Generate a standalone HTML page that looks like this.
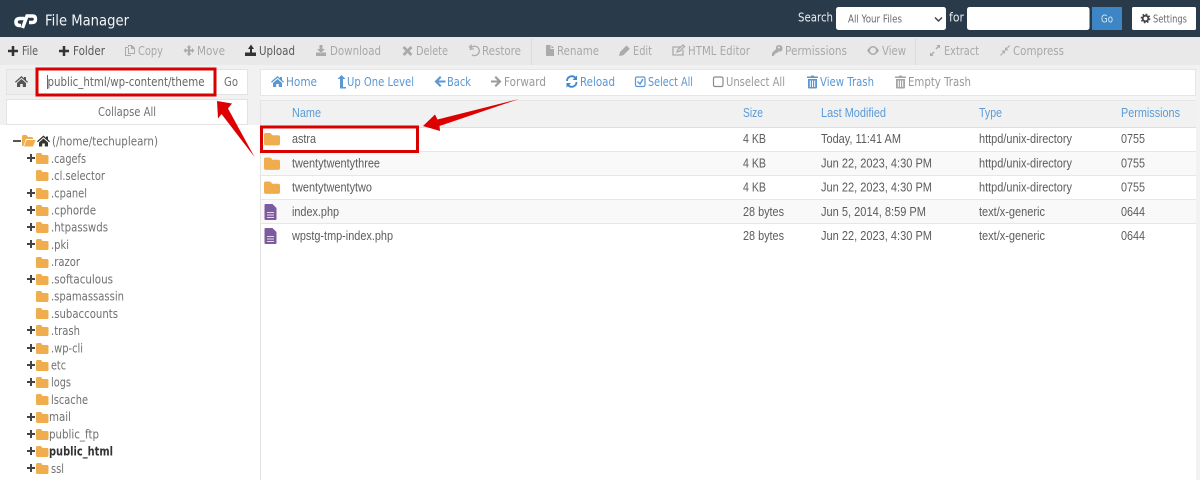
<!DOCTYPE html>
<html>
<head>
<meta charset="utf-8">
<title>File Manager</title>
<style>
html,body{margin:0;padding:0;background:#fff;width:1200px;height:480px;overflow:hidden}
svg{display:block;filter:blur(0.35px)}
text{font-family:"Liberation Sans",sans-serif;font-size:13px}
.t,.d,.a,.n,.g,.o{font-family:"DejaVu Sans","Liberation Sans",sans-serif;font-size:12.5px}
.t{fill:#707070}
.d{fill:#a8a8a8}
.a{fill:#5a5a5a}
.n{fill:#5a97d3}
.g{fill:#989898}
.h{fill:#5b9bd8;font-size:12.5px}
.c{fill:#5c5c5c;font-size:12.5px}
</style>
</head>
<body>
<svg width="1200" height="480" viewBox="0 0 1200 480" xmlns="http://www.w3.org/2000/svg">
<defs>
<path id="folder" d="M0 1.5Q0 0 1.5 0H5L6.500 2H11Q12.500 2 12.500 3.500V9.500Q12.500 11 11 11H1.500Q0 11 0 9.500Z" fill="#f0ad4e"/>
<path id="plus" d="M3 0H5V3H8V5H5V8H3V5H0V3H3Z"/>
<path id="home" d="M6.500 0L9 2.200V1H11V4L13 5.800L12.200 6.700L6.500 1.800L0.800 6.700L0 5.800ZM2 7L6.500 3L11 7V11H7.800V8H5.200V11H2Z"/>
<path id="file" d="M0 1Q0 0 1 0H8L12 4V15Q12 16 11 16H1Q0 16 0 15Z" fill="#7c5c9e"/>
<path id="trash" d="M3.500 1L4.500 0H6.500L7.500 1H11V2.500H0V1ZM1 3.500H10V12Q10 13 9 13H2Q1 13 1 12ZM2.800 5V11.500H3.800V5ZM5 5V11.500H6V5ZM7.200 5V11.500H8.200V5Z" fill-rule="evenodd"/>
</defs>

<!-- page backgrounds -->
<rect width="1200" height="480" fill="#fff"/>
<rect x="0" y="65" width="1200" height="62" fill="#f1f1f1"/>
<rect x="0" y="125" width="260" height="355" fill="#fff"/>
<rect x="260" y="96" width="940" height="4" fill="#f5f5f5"/>
<rect x="1196" y="65" width="4" height="415" fill="#f2f2f2"/>
<rect x="260" y="100" width="1" height="380" fill="#e3e3e3"/>

<!-- header -->
<rect width="1200" height="37" fill="#293a4a"/>
<path d="M24.500 18.500H20Q16 18.500 16 22Q16 25.500 20 25.500H21" fill="none" stroke="#fff" stroke-width="3.600"/>
<path d="M22.500 28L27 16H32.500Q35.500 16 35.500 19Q35.500 22.500 32 22.500H29" fill="none" stroke="#fff" stroke-width="3.400"/>
<text x="45" y="25.500" textLength="84" lengthAdjust="spacingAndGlyphs" class="o" style="font-size:15.500px;fill:#f2f4f6">File Manager</text>
<text x="798" y="21.500" textLength="35" lengthAdjust="spacingAndGlyphs" class="o" style="font-size:12px;fill:#e8ebee">Search</text>
<rect x="836" y="7" width="110" height="23" rx="2.500" fill="#fff"/>
<text x="848" y="22.500" textLength="54" lengthAdjust="spacingAndGlyphs" class="o" style="font-size:11px;fill:#6a6a6a">All Your Files</text>
<path d="M935 17.500L938.500 21L942 17.500" fill="none" stroke="#444" stroke-width="1.500"/>
<text x="949" y="21.500" textLength="15" lengthAdjust="spacingAndGlyphs" class="o" style="font-size:12px;fill:#e8ebee">for</text>
<rect x="967" y="7" width="122.500" height="23" rx="2.500" fill="#fff"/>
<rect x="1092" y="7" width="30" height="23" fill="#3c86c6"/>
<text x="1101" y="22.500" textLength="12" lengthAdjust="spacingAndGlyphs" class="o" style="font-size:11px;fill:#d8e8f5">Go</text>
<rect x="1132" y="7" width="64" height="23" rx="1.500" fill="#fff"/>
<circle cx="1145.500" cy="18.500" r="2.800" fill="none" stroke="#444" stroke-width="1.800"/>
<circle cx="1145.500" cy="18.500" r="4.200" fill="none" stroke="#444" stroke-width="1.400" stroke-dasharray="1.700 1.600"/>
<text x="1153" y="22.500" textLength="34" lengthAdjust="spacingAndGlyphs" class="o" style="font-size:11px;fill:#6a6a6a">Settings</text>

<!-- toolbar -->
<rect y="37" width="1200" height="28" fill="#e9e9e9"/>
<rect x="531" y="38" width="1" height="27" fill="#dcdcdc"/>
<rect x="915" y="38" width="1" height="27" fill="#dcdcdc"/>
<g fill="#333">
<use href="#plus" transform="translate(8,46) scale(1.250)"/>
<use href="#plus" transform="translate(59,46) scale(1.250)"/>
<path d="M245 52.500H250V49H248L251 44.500L254 49H252V52.500H256V56H245Z"/>
</g>
<g fill="#ababab">
<path d="M125 47H129V48H126V55H131V56H125ZM128 45H132L135 48V54H128ZM129 46V53H134V49H131V46Z" fill-rule="evenodd"/>
<path d="M189 45L191.500 47.500H190V49.500H192V48L194.500 50.500L192 53V51.500H190V53.500H191.500L189 56L186.500 53.500H188V51.500H186V53L183.500 50.500L186 48V49.500H188V47.500H186.500Z"/>
<path d="M316 52.500H320L321 53.500L322 52.500H326V56H316ZM319.500 45H322.500V49H325L321 53L317 49H319.500Z"/>
<path d="M404.500 46L407.500 49L410.500 46L412.500 48L409.500 51L412.500 54L410.500 56L407.500 53L404.500 56L402.500 54L405.500 51L402.500 48Z"/>
<path d="M546 45H550.500V49H554V56H546ZM551.500 45.300L554 48H551.500Z"/>
<path d="M619 56L620 52L626.500 45.500L629.800 48.800L623.300 55.300Z"/>
<path d="M772 56V53L776 49Q775.500 45 779 45Q782.500 45 782.500 48.500Q782.500 52 778.500 51.500L777 53H775.500V54.500H774V56ZM778.800 46.500A1 1 0 1 0 778.801 46.500Z" fill-rule="evenodd"/>
<path d="M867 50.500Q870 46 873 46Q876 46 879 50.500Q876 55 873 55Q870 55 867 50.500ZM873 47.500A3 3 0 1 0 873.010 47.500Z" fill-rule="evenodd"/>
<path d="M930 56V52.500L931.300 53.700L933.500 51.500L934.500 52.500L932.300 54.700L933.500 56ZM940 45V48.500L938.700 47.300L936.500 49.500L935.500 48.500L937.700 46.300L936.500 45Z"/>
<path d="M1000 55L1003 52L1001.500 50.500H1005V54L1003.700 52.800L1001 55.800ZM1010 46L1007 49L1008.500 50.500H1005V47L1006.300 48.200L1009 45.200Z"/>
</g>
<g fill="none" stroke="#ababab" stroke-width="1.300">
<path d="M469 47.500L471 45.500V49H474M470 50A4.700 4.700 0 1 1 472 54.800"/>
<path d="M683 50V55H673V47H680"/>
<path d="M677 52L678 49.500L683 45L684.500 46.500L680 51Z"/>
</g>
<text x="22" y="55" textLength="16" lengthAdjust="spacingAndGlyphs" class="a">File</text>
<text x="73" y="55" textLength="32" lengthAdjust="spacingAndGlyphs" class="a">Folder</text>
<text x="138" y="55" textLength="25" lengthAdjust="spacingAndGlyphs" class="d">Copy</text>
<text x="197" y="55" textLength="28" lengthAdjust="spacingAndGlyphs" class="d">Move</text>
<text x="259" y="55" textLength="36" lengthAdjust="spacingAndGlyphs" class="a">Upload</text>
<text x="330" y="55" textLength="51" lengthAdjust="spacingAndGlyphs" class="d">Download</text>
<text x="416" y="55" textLength="32" lengthAdjust="spacingAndGlyphs" class="d">Delete</text>
<text x="482" y="55" textLength="39" lengthAdjust="spacingAndGlyphs" class="d">Restore</text>
<text x="557" y="55" textLength="42" lengthAdjust="spacingAndGlyphs" class="d">Rename</text>
<text x="633" y="55" textLength="19" lengthAdjust="spacingAndGlyphs" class="d">Edit</text>
<text x="688" y="55" textLength="62" lengthAdjust="spacingAndGlyphs" class="d">HTML Editor</text>
<text x="785" y="55" textLength="62" lengthAdjust="spacingAndGlyphs" class="d">Permissions</text>
<text x="882" y="55" textLength="24" lengthAdjust="spacingAndGlyphs" class="d">View</text>
<text x="944" y="55" textLength="35" lengthAdjust="spacingAndGlyphs" class="d">Extract</text>
<text x="1013" y="55" textLength="51" lengthAdjust="spacingAndGlyphs" class="d">Compress</text>

<!-- path bar -->
<rect x="6.500" y="69.500" width="241" height="25" fill="#fff" stroke="#e3e3e3"/>
<rect x="7" y="70" width="29" height="24" fill="#eeeeee"/>
<use href="#home" x="15" y="76" fill="#555"/>
<rect x="47" y="75" width="1" height="14" fill="#666"/>
<text x="47.500" y="86" textLength="157" lengthAdjust="spacingAndGlyphs" class="t" style="fill:#666">public_html/wp-content/theme</text>
<text x="224" y="86" textLength="14" lengthAdjust="spacingAndGlyphs" class="t">Go</text>
<rect x="6.500" y="99.500" width="241" height="25" fill="#fff" stroke="#e3e3e3"/>
<text x="98" y="116" textLength="58" lengthAdjust="spacingAndGlyphs" class="t">Collapse All</text>

<!-- tree -->
<rect x="13" y="140" width="8" height="2" fill="#555"/>
<path d="M22 136.500Q22 135 23.500 135H26.500L28 137H32Q33 137 33 138.500V139H26L23.500 146H22Z M26.500 140H35.500L33 146.500H24Z" fill="#f0ad4e"/>
<use href="#home" x="37" y="135.500" fill="#333"/>
<text x="52" y="145.500" textLength="106" lengthAdjust="spacingAndGlyphs" class="t">(/home/techuplearn)</text>

<g fill="#444">
<use href="#plus" x="27" y="154"/>
<use href="#plus" x="27" y="189"/>
<use href="#plus" x="27" y="206"/>
<use href="#plus" x="27" y="223"/>
<use href="#plus" x="27" y="240"/>
<use href="#plus" x="27" y="275"/>
<use href="#plus" x="27" y="326"/>
<use href="#plus" x="27" y="344"/>
<use href="#plus" x="27" y="361"/>
<use href="#plus" x="27" y="378"/>
<use href="#plus" x="27" y="413"/>
<use href="#plus" x="27" y="430"/>
<use href="#plus" x="27" y="447"/>
<use href="#plus" x="27" y="464"/>
</g>
<use href="#folder" x="36" y="153"/>
<use href="#folder" x="36" y="170"/>
<use href="#folder" x="36" y="188"/>
<use href="#folder" x="36" y="205"/>
<use href="#folder" x="36" y="222"/>
<use href="#folder" x="36" y="239"/>
<use href="#folder" x="36" y="257"/>
<use href="#folder" x="36" y="274"/>
<use href="#folder" x="36" y="291"/>
<use href="#folder" x="36" y="308"/>
<use href="#folder" x="36" y="325"/>
<use href="#folder" x="36" y="343"/>
<use href="#folder" x="36" y="360"/>
<use href="#folder" x="36" y="377"/>
<use href="#folder" x="36" y="394"/>
<use href="#folder" x="36" y="412"/>
<use href="#folder" x="36" y="429"/>
<use href="#folder" x="36" y="446"/>
<use href="#folder" x="36" y="463"/>

<text x="51" y="163" textLength="35" lengthAdjust="spacingAndGlyphs" class="t">.cagefs</text>
<text x="51" y="180" textLength="54" lengthAdjust="spacingAndGlyphs" class="t">.cl.selector</text>
<text x="51" y="197.500" textLength="36" lengthAdjust="spacingAndGlyphs" class="t">.cpanel</text>
<text x="51" y="214.500" textLength="45" lengthAdjust="spacingAndGlyphs" class="t">.cphorde</text>
<text x="51" y="231.500" textLength="57" lengthAdjust="spacingAndGlyphs" class="t">.htpasswds</text>
<text x="51" y="249" textLength="18" lengthAdjust="spacingAndGlyphs" class="t">.pki</text>
<text x="51" y="266" textLength="29" lengthAdjust="spacingAndGlyphs" class="t">.razor</text>
<text x="51" y="283.500" textLength="62" lengthAdjust="spacingAndGlyphs" class="t">.softaculous</text>
<text x="51" y="300.500" textLength="73" lengthAdjust="spacingAndGlyphs" class="t">.spamassassin</text>
<text x="51" y="318" textLength="67" lengthAdjust="spacingAndGlyphs" class="t">.subaccounts</text>
<text x="51" y="335" textLength="29" lengthAdjust="spacingAndGlyphs" class="t">.trash</text>
<text x="51" y="352.500" textLength="32" lengthAdjust="spacingAndGlyphs" class="t">.wp-cli</text>
<text x="51" y="369.500" textLength="15" lengthAdjust="spacingAndGlyphs" class="t">etc</text>
<text x="51" y="386.500" textLength="20" lengthAdjust="spacingAndGlyphs" class="t">logs</text>
<text x="51" y="404" textLength="37" lengthAdjust="spacingAndGlyphs" class="t">lscache</text>
<text x="49" y="421" textLength="22" lengthAdjust="spacingAndGlyphs" class="t">mail</text>
<text x="49" y="438.500" textLength="50" lengthAdjust="spacingAndGlyphs" class="t">public_ftp</text>
<text x="49" y="455.500" textLength="64" lengthAdjust="spacingAndGlyphs" class="t" style="font-weight:bold;fill:#333">public_html</text>
<text x="51" y="473" textLength="13" lengthAdjust="spacingAndGlyphs" class="t">ssl</text>

<!-- nav bar -->
<rect x="260.500" y="69.500" width="935" height="26" fill="#fff" stroke="#e6e6e6"/>
<g fill="#5a97d3">
<use href="#home" x="271" y="76"/>
<path d="M341.500 75L345.500 79H343V87H346V88.500H340V79H337.500Z"/>
<path d="M440 76L441.500 77.500L438.500 80.500H445.500V82.500H438.500L441.500 85.500L440 87L434.500 81.500Z"/>
<use href="#trash" x="807" y="75.500"/>
</g>
<path d="M496 76L494.500 77.500L497.500 80.500H491V82.500H497.500L494.500 85.500L496 87L501.500 81.500Z" fill="#9a9a9a"/>
<g fill="none" stroke="#3f87cc" stroke-width="1.800">
<path d="M567 81A4.800 4.800 0 0 1 575.500 78"/>
<path d="M576.500 82A4.800 4.800 0 0 1 568 85"/>
</g>
<path d="M577 75.500V80H572.500ZM566.500 87.500V83H571Z" fill="#3f87cc"/>
<rect x="635.500" y="77" width="9.500" height="9.500" rx="1.500" fill="none" stroke="#5a97d3" stroke-width="1.200"/>
<path d="M637.500 81.500L640 84L643 79" fill="none" stroke="#5a97d3" stroke-width="1.400"/>
<rect x="713.500" y="77" width="9.500" height="9.500" rx="1.500" fill="none" stroke="#8a8a8a" stroke-width="1.200"/>
<use href="#trash" x="895" y="75.500" fill="#a5a5a5"/>
<text x="286" y="86" textLength="31" lengthAdjust="spacingAndGlyphs" class="n">Home</text>
<text x="347" y="86" textLength="67" lengthAdjust="spacingAndGlyphs" class="n">Up One Level</text>
<text x="447" y="86" textLength="24" lengthAdjust="spacingAndGlyphs" class="n">Back</text>
<text x="504" y="86" textLength="42" lengthAdjust="spacingAndGlyphs" class="g">Forward</text>
<text x="580" y="86" textLength="35" lengthAdjust="spacingAndGlyphs" class="n">Reload</text>
<text x="648" y="86" textLength="45" lengthAdjust="spacingAndGlyphs" class="n">Select All</text>
<text x="726" y="86" textLength="59" lengthAdjust="spacingAndGlyphs" class="g">Unselect All</text>
<text x="820" y="86" textLength="54" lengthAdjust="spacingAndGlyphs" class="n">View Trash</text>
<text x="908" y="86" textLength="63" lengthAdjust="spacingAndGlyphs" class="g">Empty Trash</text>

<!-- table -->
<rect x="261" y="100" width="935" height="27" fill="#f1f1f1"/>
<rect x="261" y="100" width="935" height="1" fill="#e6e6e6"/>
<rect x="261" y="127" width="935" height="1" fill="#dedede"/>
<rect x="261" y="152" width="935" height="23" fill="#f9f9f9"/>
<rect x="261" y="200" width="935" height="23" fill="#f9f9f9"/>
<rect x="261" y="151" width="935" height="1" fill="#e6e6e6"/>
<rect x="261" y="175" width="935" height="1" fill="#e6e6e6"/>
<rect x="261" y="199" width="935" height="1" fill="#e6e6e6"/>
<rect x="261" y="223" width="935" height="1" fill="#e6e6e6"/>

<text x="292" y="117" textLength="29" lengthAdjust="spacingAndGlyphs" class="h">Name</text>
<text x="743" y="117" textLength="20" lengthAdjust="spacingAndGlyphs" class="h">Size</text>
<text x="821" y="117" textLength="65" lengthAdjust="spacingAndGlyphs" class="h">Last Modified</text>
<text x="979" y="117" textLength="23" lengthAdjust="spacingAndGlyphs" class="h">Type</text>
<text x="1121" y="117" textLength="59" lengthAdjust="spacingAndGlyphs" class="h">Permissions</text>

<use href="#folder" transform="translate(264,133) scale(1.280,1.120)"/>
<use href="#folder" transform="translate(264,157.500) scale(1.280,1.120)"/>
<use href="#folder" transform="translate(264,181.500) scale(1.280,1.120)"/>
<use href="#file" x="264.500" y="204"/>
<use href="#file" x="264.500" y="228"/>
<g fill="#e4dcec">
<rect x="267" y="212" width="7" height="1"/><rect x="267" y="214.500" width="7" height="1"/><rect x="267" y="217" width="7" height="1"/>
<rect x="267" y="236" width="7" height="1"/><rect x="267" y="238.500" width="7" height="1"/><rect x="267" y="241" width="7" height="1"/>
</g>

<text x="292" y="143" textLength="24" lengthAdjust="spacingAndGlyphs" class="c">astra</text>
<text x="743" y="143" textLength="23" lengthAdjust="spacingAndGlyphs" class="c">4 KB</text>
<text x="821" y="143" textLength="80" lengthAdjust="spacingAndGlyphs" class="c">Today, 11:41 AM</text>
<text x="979" y="143" textLength="93" lengthAdjust="spacingAndGlyphs" class="c">httpd/unix-directory</text>
<text x="1121" y="143" textLength="24" lengthAdjust="spacingAndGlyphs" class="c">0755</text>

<text x="292" y="167.500" textLength="88" lengthAdjust="spacingAndGlyphs" class="c">twentytwentythree</text>
<text x="743" y="167.500" textLength="23" lengthAdjust="spacingAndGlyphs" class="c">4 KB</text>
<text x="821" y="167.500" textLength="111" lengthAdjust="spacingAndGlyphs" class="c">Jun 22, 2023, 4:30 PM</text>
<text x="979" y="167.500" textLength="93" lengthAdjust="spacingAndGlyphs" class="c">httpd/unix-directory</text>
<text x="1121" y="167.500" textLength="24" lengthAdjust="spacingAndGlyphs" class="c">0755</text>

<text x="292" y="191.500" textLength="80" lengthAdjust="spacingAndGlyphs" class="c">twentytwentytwo</text>
<text x="743" y="191.500" textLength="23" lengthAdjust="spacingAndGlyphs" class="c">4 KB</text>
<text x="821" y="191.500" textLength="111" lengthAdjust="spacingAndGlyphs" class="c">Jun 22, 2023, 4:30 PM</text>
<text x="979" y="191.500" textLength="93" lengthAdjust="spacingAndGlyphs" class="c">httpd/unix-directory</text>
<text x="1121" y="191.500" textLength="24" lengthAdjust="spacingAndGlyphs" class="c">0755</text>

<text x="292" y="216" textLength="47" lengthAdjust="spacingAndGlyphs" class="c">index.php</text>
<text x="743" y="216" textLength="41" lengthAdjust="spacingAndGlyphs" class="c">28 bytes</text>
<text x="821" y="216" textLength="105" lengthAdjust="spacingAndGlyphs" class="c">Jun 5, 2014, 8:59 PM</text>
<text x="979" y="216" textLength="66" lengthAdjust="spacingAndGlyphs" class="c">text/x-generic</text>
<text x="1121" y="216" textLength="24" lengthAdjust="spacingAndGlyphs" class="c">0644</text>

<text x="292" y="240" textLength="101" lengthAdjust="spacingAndGlyphs" class="c">wpstg-tmp-index.php</text>
<text x="743" y="240" textLength="41" lengthAdjust="spacingAndGlyphs" class="c">28 bytes</text>
<text x="821" y="240" textLength="111" lengthAdjust="spacingAndGlyphs" class="c">Jun 22, 2023, 4:30 PM</text>
<text x="979" y="240" textLength="66" lengthAdjust="spacingAndGlyphs" class="c">text/x-generic</text>
<text x="1121" y="240" textLength="24" lengthAdjust="spacingAndGlyphs" class="c">0644</text>

<!-- annotations -->
<rect x="37" y="69" width="178" height="26" fill="none" stroke="#d90000" stroke-width="3"/>
<rect x="261.500" y="127" width="156" height="24.500" fill="none" stroke="#d90000" stroke-width="3"/>
<path d="M217 101L232 103.500L228 108.500L254.500 157L221.500 114L218 118.500Z" fill="#dc0000"/>
<path d="M423 126L435 114.500L437.500 119.500L519 99L439.500 126L440 131Z" fill="#dc0000"/>
</svg>
</body>
</html>
